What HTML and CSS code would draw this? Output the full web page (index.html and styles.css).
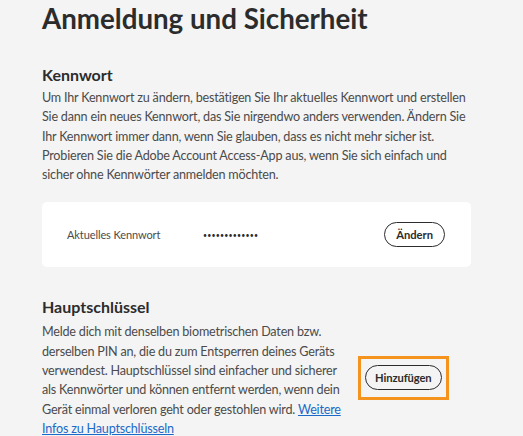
FILE: index.html
```html
<!DOCTYPE html>
<html lang="de">
<head>
<meta charset="utf-8">
<title>Anmeldung und Sicherheit</title>
<link rel="stylesheet" href="styles.css">
</head>
<body>
<main class="page">
  <h1 class="title">Anmeldung und Sicherheit</h1>

  <section class="section">
    <h2 class="section-title">Kennwort</h2>
    <p class="text">Um Ihr Kennwort zu ändern, bestätigen Sie Ihr aktuelles Kennwort und erstellen Sie dann ein neues Kennwort, das Sie nirgendwo anders verwenden. Ändern Sie Ihr Kennwort immer dann, wenn Sie glauben, dass es nicht mehr sicher ist. Probieren Sie die Adobe Account Access-App aus, wenn Sie sich einfach und sicher ohne Kennwörter anmelden möchten.</p>
    <div class="card">
      <span class="label">Aktuelles Kennwort</span>
      <span class="dots">•••••••••••••</span>
      <button class="pill">Ändern</button>
    </div>
  </section>

  <section class="section section-keys">
    <h2 class="section-title">Hauptschlüssel</h2>
    <div class="row">
      <p class="text text-narrow">Melde dich mit denselben biometrischen Daten bzw. derselben PIN an, die du zum Entsperren deines Geräts verwendest. Hauptschlüssel sind einfacher und sicherer als Kennwörter und können entfernt werden, wenn dein Gerät einmal verloren geht oder gestohlen wird. <a class="link" href="#">Weitere Infos zu Hauptschlüsseln</a></p>
      <div class="focus">
        <button class="pill pill-compact">Hinzufügen</button>
      </div>
    </div>
  </section>
</main>
</body>
</html>
```

FILE: styles.css
```css
html, body {
  margin: 0;
  padding: 0;
  background: #f4f4f4;
}

body {
  font-family: "Lato", "Noto Sans", sans-serif;
  color: #2c2c2c;
}

.page {
  padding: 0 52px 0 42px;
}

.title {
  margin: 0;
  padding-top: 2px;
  font-size: 27.7px;
  line-height: 34px;
  font-weight: 700;
  color: #2c2c2c;
}

.section {
  margin-top: 29px;
}

.section-title {
  margin: 0;
  font-size: 16px;
  line-height: 20px;
  font-weight: 700;
  color: #2c2c2c;
}

.text {
  margin: 3px 0 0;
  font-size: 12.6px;
  letter-spacing: -0.2px;
  line-height: 19.3px;
  color: #4b4b4b;
}

.card {
  margin-top: 18px;
  height: 65px;
  box-sizing: border-box;
  background: #fff;
  border-radius: 5px;
  display: grid;
  grid-template-columns: 136px 1fr auto;
  align-items: center;
  padding: 0 26px 0 25px;
}

.label {
  font-size: 11px;
  letter-spacing: -0.1px;
  color: #4b4b4b;
}

.dots {
  font-size: 7px;
  letter-spacing: 0.2px;
  color: #2c2c2c;
}

.pill {
  height: 25px;
  box-sizing: border-box;
  border: 1.5px solid #2c2c2c;
  border-radius: 13px;
  background: transparent;
  font-family: inherit;
  font-size: 11.2px;
  font-weight: 700;
  color: #2c2c2c;
  padding: 0 11px;
}

.pill-compact {
  padding: 0 9px;
  letter-spacing: -0.1px;
}

.section-keys {
  margin-top: 30px;
}

.row {
  display: flex;
  align-items: center;
  gap: 16px;
}

.text-narrow {
  width: 300px;
  flex: none;
  margin-top: 5px;
}

.link {
  color: #1b6ac9;
}

.focus {
  border: 3px solid #f4941f;
  padding: 6px 4px 7px;
  display: flex;
}
```
